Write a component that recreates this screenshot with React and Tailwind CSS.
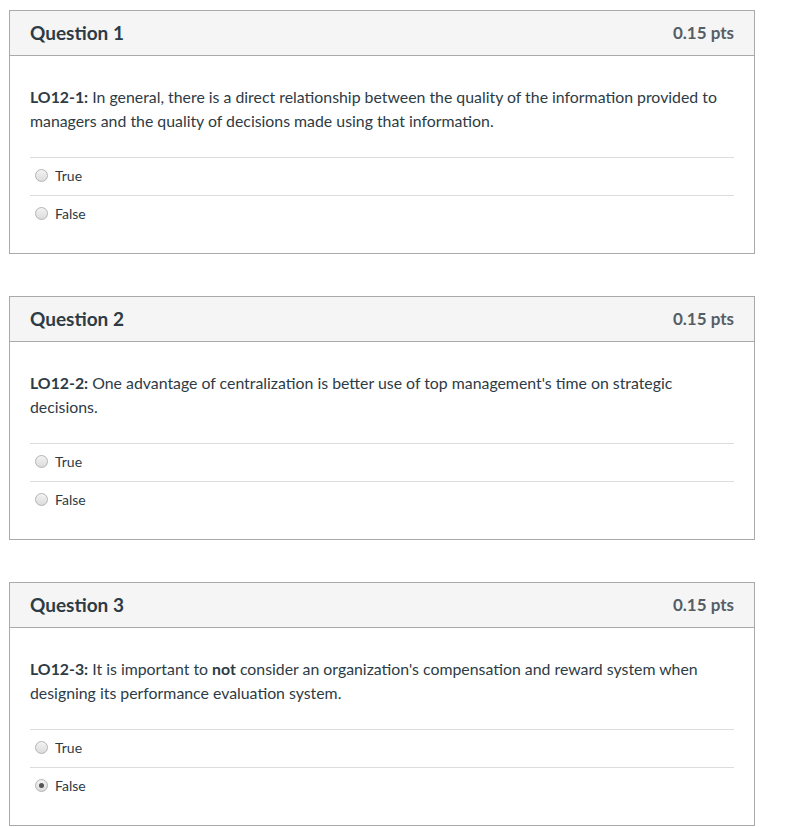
import React from "react";

const questions = [
  {
    n: 1,
    parts: [
      { b: "LO12-1:" },
      { t: " In general, there is a direct relationship between the quality of the information provided to managers and the quality of decisions made using that information." },
    ],
    selected: null,
  },
  {
    n: 2,
    parts: [
      { b: "LO12-2:" },
      { t: " One advantage of centralization is better use of top management's time on strategic decisions." },
    ],
    selected: null,
  },
  {
    n: 3,
    parts: [
      { b: "LO12-3:" },
      { t: " It is important to " },
      { b: "not" },
      { t: " consider an organization's compensation and reward system when designing its performance evaluation system." },
    ],
    selected: "False",
  },
];

function Radio({ checked }) {
  return (
    <span className="relative inline-flex h-[13px] w-[13px] items-center justify-center rounded-full border border-[#b4b4b4] bg-gradient-to-b from-[#f3f3f3] to-[#dcdcdc]">
      {checked && <span className="h-[5px] w-[5px] rounded-full bg-[#555]" />}
    </span>
  );
}

function Question({ q }) {
  return (
    <div className="w-[746px] border border-[#aaaaaa] bg-white">
      <div className="flex h-[45px] items-center justify-between border-b border-[#aaaaaa] bg-[#f5f5f5] px-[20px]">
        <span className="text-[19px] font-bold text-[#2d3b45]">Question {q.n}</span>
        <span className="text-[17px] font-bold text-[#555e66]">0.15 pts</span>
      </div>
      <div className="px-[20px] pb-[20px] pt-[29px]">
        <p className="w-[700px] text-[15.85px] leading-[24px] text-[#2d3b45]">
          {q.parts.map((p, i) =>
            p.b ? <b key={i} className="font-bold">{p.b}</b> : <span key={i}>{p.t}</span>
          )}
        </p>
        <div className="mt-[24px]">
          {["True", "False"].map((a) => (
            <div key={a} className="flex h-[38px] items-center gap-[7px] border-t border-[#dddddd] pb-[2px] pl-[5px] text-[14px] text-[#2d3b45]">
              <Radio checked={q.selected === a} />
              <span>{a}</span>
            </div>
          ))}
        </div>
      </div>
    </div>
  );
}

export default function App() {
  return (
    <div className="min-h-[827px] bg-white pl-[9px] pt-[10px]" style={{ fontFamily: "Lato, 'Open Sans', sans-serif" }}>
      <div className="flex flex-col gap-[42px]">
        {questions.map((q) => (
          <Question key={q.n} q={q} />
        ))}
      </div>
    </div>
  );
}
